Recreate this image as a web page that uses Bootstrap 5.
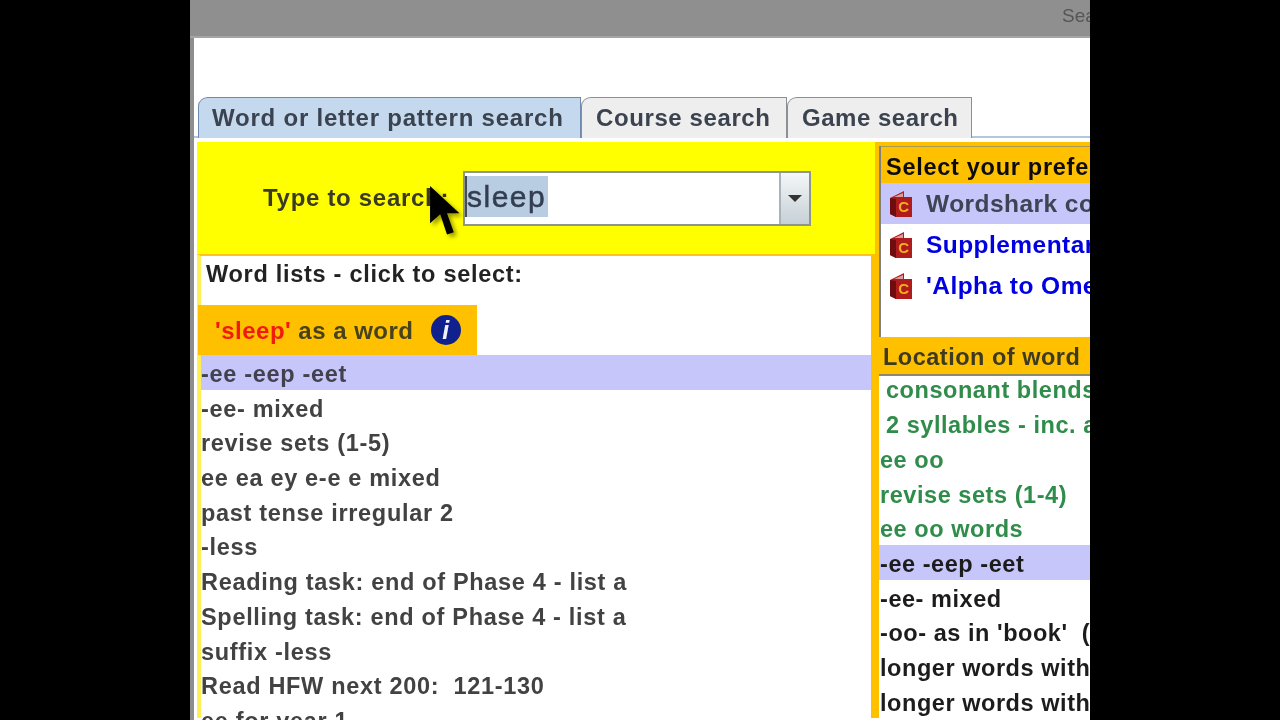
<!DOCTYPE html>
<html>
<head>
    <title>Word search</title>
    <link href="https://cdn.jsdelivr.net/npm/bootstrap@5.3.0/dist/css/bootstrap.min.css" rel="stylesheet">
    <style>
        html, body { height: 100%; background: #000; overflow: hidden; }
        body, .stage { font-family: "Liberation Sans", Arial, sans-serif; }
        .stage { width: 900px; height: 720px; margin-left: 190px; position: relative; overflow: hidden; background: #fff; color: #333; filter: blur(.35px); }
        .title-strip { height: 38px; background: #8f8f8f; color: #555; font-size: 19px; line-height: 32px; padding-left: 872px; white-space: nowrap; border-bottom: 2px solid #a5a5a5; }
        .win-body { height: 682px; border-left: 4px solid #8d8d8d; }
        .tab-row { padding: 59px 0 0 4px; border-bottom: 2px solid #b5c6da; height: 100px; }
        .tab-item { height: 41px; padding: 0 14px; font-size: 24px; font-weight: 700; line-height: 39px; letter-spacing: .6px; color: #3c4350; background: #eee; border: 1px solid #8b8f96; border-bottom: 0; border-top-left-radius: 10px 9px; white-space: nowrap; }
        .tab-item.on { background: #c5d9ee; border-color: #7088ad; width: 383px; padding: 0 13px; letter-spacing: .78px; }
        .tab-two { width: 206px; }
        .tab-three { width: 185px; letter-spacing: .52px; }
        .main-row { height: 580px; padding: 4px 0 0 3px; }
        .left-side { width: 674px; flex: none; }
        .search-band { height: 112px; margin-right: -4px; position: relative; z-index: 1; background: #ff0; padding-left: 66px; font-size: 24px; font-weight: 700; letter-spacing: .7px; color: #3b3b22; }
        .search-label { width: 200px; white-space: nowrap; }
        .combo { width: 348px; height: 55px; border: 2px solid #8e968e; background: #fff; }
        .combo-text { flex: 1; padding: 3px 0 0 0; font-size: 30px; font-weight: 400; -webkit-text-stroke: .5px #333d50; color: #333d50; letter-spacing: 1.5px; line-height: 41px; }
        .combo-sel { display: inline-block; width: 83px; background: #b9cde2; border-left: 2px solid #454c5c; }
        .combo-arrow { width: 30px; border-left: 2px solid #a9b4ba; background: linear-gradient(#f4f7f8, #c6d0d6); }
        .combo-arrow i { border-top: 7px solid #333; border-left: 7px solid transparent; border-right: 7px solid transparent; }
        .list-panel { height: 464px; border-top: 2px solid #ffc21a; border-left: 4px solid #ffee55; background: #fff; }
        .list-title { height: 49px; padding: 4px 0 0 5px; font-size: 23.5px; font-weight: 700; line-height: 29px; color: #222; letter-spacing: .72px; white-space: nowrap; }
        .word-head { width: 279px; height: 50px; margin-left: -3px; background: #ffc000; padding: 2px 0 0 17px; font-size: 24px; font-weight: 700; letter-spacing: .5px; color: #46421c; white-space: nowrap; }
        .word-red { color: #f21a0c; margin-right: 7px; }
        .info-dot { margin-left: 17px; margin-top: -3px; flex: none; }
        .word-list { border-radius: 0; }
        .word-list .list-group-item { height: 34.7px; padding: 0; border: 0; font-size: 23.5px; font-weight: 700; line-height: 38px; letter-spacing: .68px; color: #424242; background: transparent; white-space: nowrap; }
        .word-list .list-group-item.on { background: #c6c6fa; color: #42424f; }
        .right-side { flex: 1; min-width: 0; background: #ffc000; border-left: 8px solid #ffc000; white-space: nowrap; overflow: hidden; }
        .pref-box { height: 191px; border-left: 2px solid #808080; background: #fff; margin-top: 4px; }
        .pref-head { height: 37px; background: #ffc000; color: #0c0c0c; border-top: 1px solid #a89a50; font-size: 23.5px; font-weight: 700; padding-left: 5px; line-height: 40px; letter-spacing: .72px; }
        .pref-row { height: 41px; gap: 13px; padding: 1px 0 0 8px; font-size: 24.5px; font-weight: 700; color: #0000e0; letter-spacing: .45px; }
        .pref-row.on { background: #c6c6fa; color: #3e4454; }
        .pref-row svg { flex: none; }
        .loc-head { height: 39px; background: #ffc000; border-bottom: 2px solid #8a8a6a; color: #3d3a20; font-size: 23.5px; font-weight: 700; padding-left: 4px; line-height: 40px; letter-spacing: .5px; }
        .loc-list { background: #fff; height: 400px; border-radius: 0; }
        .loc-list .list-group-item { height: 34.7px; padding: 0 0 0 1px; border: 0; font-size: 23.5px; font-weight: 700; line-height: 38px; letter-spacing: .55px; color: #1c1c1c; background: transparent; }
        .loc-list .list-group-item.green { color: #2f8c4a; }
        .loc-list .list-group-item.pad { padding-left: 7px; }
        .loc-list .list-group-item.first { height: 30.2px; line-height: 28px; }
        .loc-list .list-group-item.on { background: #c6c6fa; }
        .pointer-mark { position: absolute; z-index: 2; left: 240px; top: 186px; filter: drop-shadow(3px 3px 2px rgba(0,0,0,.4)); }
    </style>
</head>
<body>
    <div class="stage">
        <div class="title-strip">Search</div>
        <div class="win-body">
            <div class="tab-row d-flex">
                <div class="tab-item on">Word or letter pattern search</div>
                <div class="tab-item tab-two">Course search</div>
                <div class="tab-item tab-three">Game search</div>
            </div>
            <div class="main-row d-flex">
                <div class="left-side d-flex flex-column">
                    <div class="search-band d-flex align-items-center">
                        <div class="search-label">Type to search:</div>
                        <div class="combo d-flex">
                            <div class="combo-text"><span class="combo-sel">sleep</span></div>
                            <div class="combo-arrow d-flex align-items-center justify-content-center"><i></i></div>
                        </div>
                    </div>
                    <div class="list-panel">
                        <div class="list-title">Word lists - click to select:</div>
                        <div class="word-head d-flex align-items-center">
                            <span class="word-red">'sleep'</span> as a word
                            <svg class="info-dot" width="30" height="30" viewBox="0 0 30 30"><circle cx="15" cy="15" r="15" fill="#10208c"/><text x="15" y="24" text-anchor="middle" font-family="Liberation Sans, sans-serif" font-size="25" font-weight="700" font-style="italic" fill="#eef2ff">i</text></svg>
                        </div>
                        <div class="list-group word-list">
                            <div class="list-group-item on">-ee -eep -eet</div>
                            <div class="list-group-item">-ee- mixed</div>
                            <div class="list-group-item">revise sets (1-5)</div>
                            <div class="list-group-item">ee ea ey e-e e mixed</div>
                            <div class="list-group-item">past tense irregular 2</div>
                            <div class="list-group-item">-less</div>
                            <div class="list-group-item">Reading task: end of Phase 4 - list a</div>
                            <div class="list-group-item">Spelling task: end of Phase 4 - list a</div>
                            <div class="list-group-item">suffix -less</div>
                            <div class="list-group-item">Read HFW next 200:&nbsp; 121-130</div>
                            <div class="list-group-item">ee for year 1</div>
                        </div>
                    </div>
                </div>
                <div class="right-side">
                    <div class="pref-box">
                        <div class="pref-head">Select your preferred course</div>
                        <div class="pref-row on d-flex align-items-center">
                            <svg width="24" height="29" viewBox="0 0 24 29"><path d="M1 8 15 1v6h8v20H7l-6-3z" fill="#b01c1c"/><path d="M1 8l6 1v18l-6-3z" fill="#6d0d10"/><path d="M5 7l9-4v4z" fill="#d8a0a0"/><text x="15" y="22" text-anchor="middle" font-family="Liberation Sans, sans-serif" font-size="15" font-weight="700" fill="#f5b21e">C</text></svg>
                            <span>Wordshark courses</span>
                        </div>
                        <div class="pref-row d-flex align-items-center">
                            <svg width="24" height="29" viewBox="0 0 24 29"><path d="M1 8 15 1v6h8v20H7l-6-3z" fill="#b01c1c"/><path d="M1 8l6 1v18l-6-3z" fill="#6d0d10"/><path d="M5 7l9-4v4z" fill="#d8a0a0"/><text x="15" y="22" text-anchor="middle" font-family="Liberation Sans, sans-serif" font-size="15" font-weight="700" fill="#f5b21e">C</text></svg>
                            <span>Supplementary courses</span>
                        </div>
                        <div class="pref-row d-flex align-items-center">
                            <svg width="24" height="29" viewBox="0 0 24 29"><path d="M1 8 15 1v6h8v20H7l-6-3z" fill="#b01c1c"/><path d="M1 8l6 1v18l-6-3z" fill="#6d0d10"/><path d="M5 7l9-4v4z" fill="#d8a0a0"/><text x="15" y="22" text-anchor="middle" font-family="Liberation Sans, sans-serif" font-size="15" font-weight="700" fill="#f5b21e">C</text></svg>
                            <span>'Alpha to Omega'</span>
                        </div>
                    </div>
                    <div class="loc-head">Location of word</div>
                    <div class="list-group loc-list">
                        <div class="list-group-item green pad first">consonant blends</div>
                        <div class="list-group-item green pad">2 syllables - inc. all</div>
                        <div class="list-group-item green">ee oo</div>
                        <div class="list-group-item green">revise sets (1-4)</div>
                        <div class="list-group-item green">ee oo words</div>
                        <div class="list-group-item on">-ee -eep -eet</div>
                        <div class="list-group-item">-ee- mixed</div>
                        <div class="list-group-item">-oo- as in 'book' &nbsp;(</div>
                        <div class="list-group-item">longer words with</div>
                        <div class="list-group-item">longer words with</div>
                    </div>
                </div>
            </div>
        </div>
        <svg class="pointer-mark" width="34" height="52" viewBox="0 0 30 46"><path d="M0 0v33l9-8 6 18 6-2-6-17h11z" fill="#000"/></svg>
    </div>
    <script src="https://cdn.jsdelivr.net/npm/bootstrap@5.3.0/dist/js/bootstrap.bundle.min.js"></script>
</body>
</html>
